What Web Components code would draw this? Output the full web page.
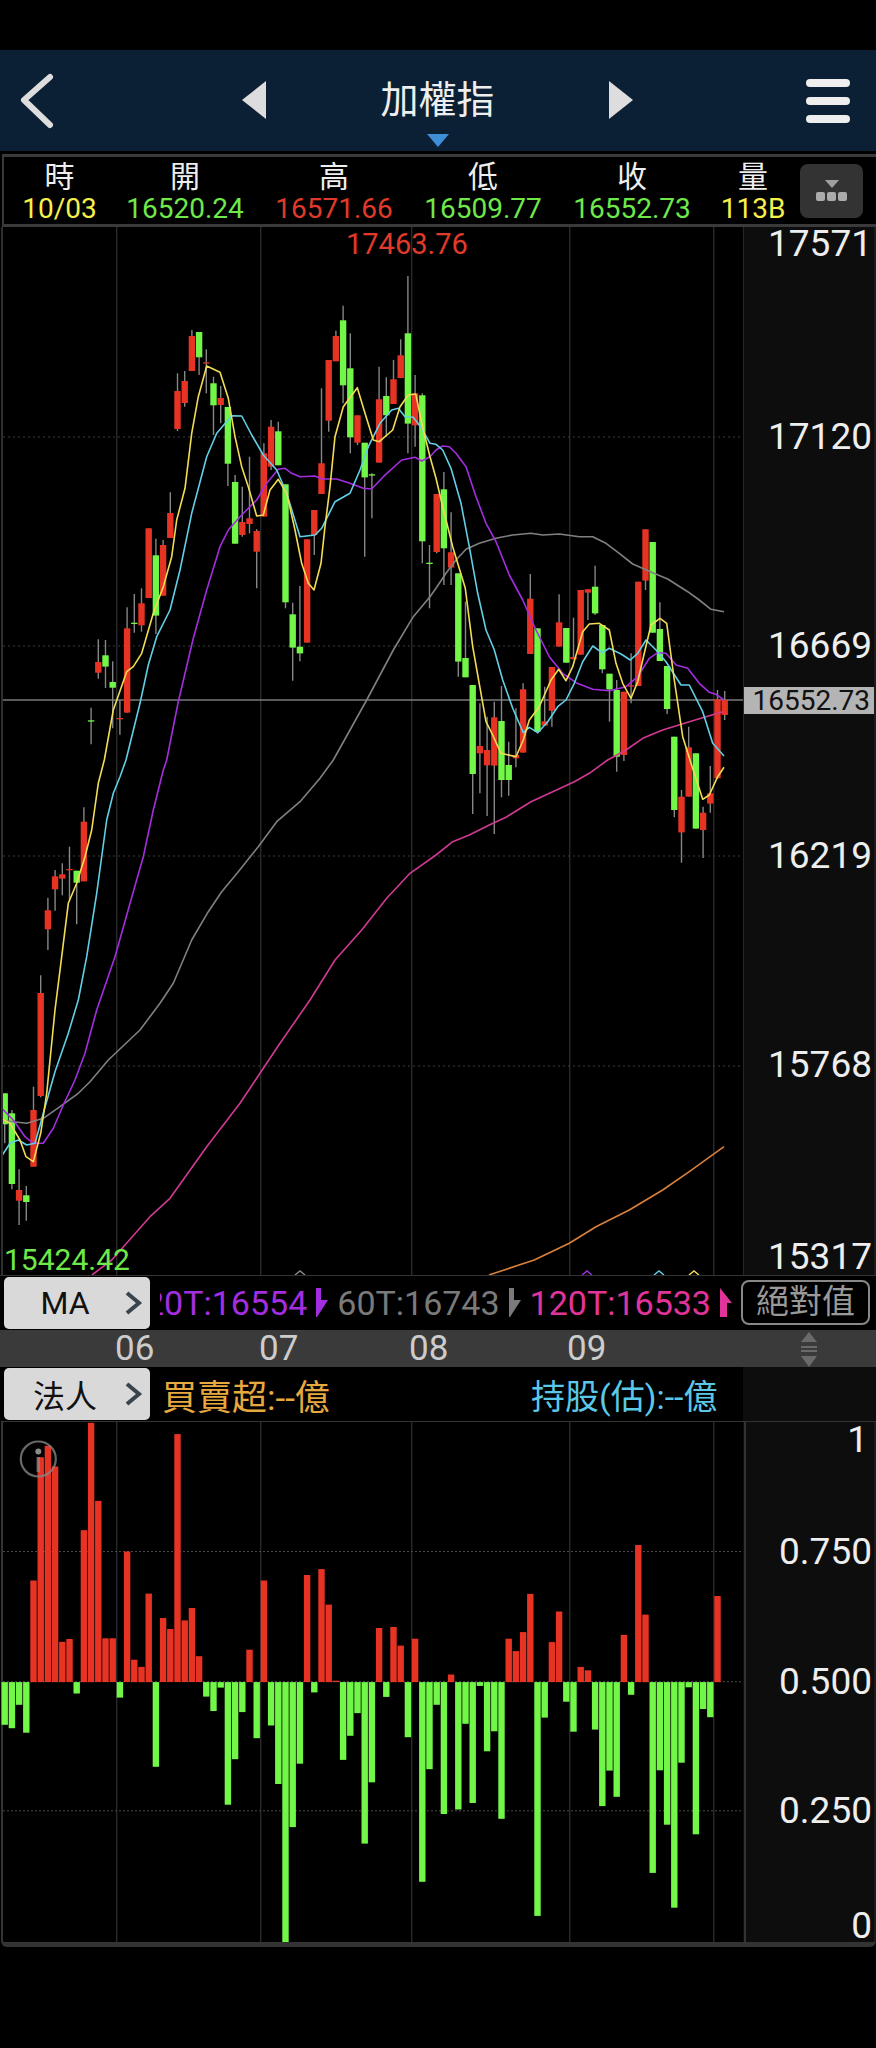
<!DOCTYPE html>
<html lang="zh-Hant">
<head>
<meta charset="utf-8">
<title>加權指</title>
<style>
  html, body { margin: 0; background: #000; }
  body { width: 876px; height: 2048px; overflow: hidden; font-family: Roboto, "Noto Sans CJK TC", sans-serif; }
</style>
</head>
<body>
<quote-header name="加權指"></quote-header>
<quote-table></quote-table>
<kline-chart></kline-chart>
<ma-row></ma-row>
<date-strip></date-strip>
<flow-row></flow-row>
<flow-chart></flow-chart>

<script>
const FUENTE = 'Roboto, "Noto Sans CJK TC", sans-serif';
const ROJO = '#e73323';
const VERDE = '#72f648';
const ns = (x) => x.toFixed(1);

class QuoteHeader extends HTMLElement {
    constructor() {
        super();
        this.attachShadow({ mode: 'open' });
    }

    connectedCallback() {
        this.shadowRoot.innerHTML = `
            <style>
                :host { display: block; margin-top: 50px; height: 101px; background: #0b2034; }
                .barra { display: grid; grid-template-columns: 242px 24px 343px 24px 1fr; height: 101px; position: relative; }
                svg { display: block; }
                .titulo { font: 38px ${FUENTE}; color: #eee; text-align: center; line-height: 101px; height: 101px; }
                .flecha { align-self: start; margin-top: 31px; }
                .back { position: absolute; left: 18px; top: 20px; }
                .menu { position: absolute; left: 806px; top: 29px; }
                .marca { position: absolute; left: 427px; top: 84px; }
            </style>
            <div class="barra">
                <svg class="back" width="40" height="60" viewBox="0 0 40 60"><path d="M32 7 6 30l26 25" fill="none" stroke="#ddd" stroke-width="6" stroke-linecap="round" stroke-linejoin="round"/></svg>
                <span></span>
                <svg class="flecha" width="24" height="38" viewBox="0 0 24 38"><path d="M24 0v38L0 19z" fill="#ddd"/></svg>
                <div class="titulo">${this.getAttribute('name')}</div>
                <svg class="flecha" width="24" height="38" viewBox="0 0 24 38"><path d="M0 0v38l24-19z" fill="#ddd"/></svg>
                <span></span>
                <svg class="menu" width="44" height="45" viewBox="0 0 44 45"><g fill="#eee"><rect width="44" height="8" rx="4"/><rect y="18" width="44" height="8" rx="4"/><rect y="36" width="44" height="8" rx="4"/></g></svg>
                <svg class="marca" width="22" height="13" viewBox="0 0 22 13"><path d="M0 0h22L11 13z" fill="#3f8fd8"/></svg>
            </div>`;
    }
}
customElements.define('quote-header', QuoteHeader);

class QuoteTable extends HTMLElement {
    constructor() {
        super();
        this.attachShadow({ mode: 'open' });
    }

    connectedCallback() {
        const cols = [
            ['時', '10/03', '#f5f04a'],
            ['開', '16520.24', '#6fe84a'],
            ['高', '16571.66', '#e03a2a'],
            ['低', '16509.77', '#6fe84a'],
            ['收', '16552.73', '#6fe84a'],
            ['量', '113B', '#f5f04a'],
        ];
        this.shadowRoot.innerHTML = `
            <style>
                :host { display: block; margin: 3px 0 0 0; border-top: 3px solid #3a3a3a; border-bottom: 3px solid #3a3a3a; border-left: 2px solid #3a3a3a; margin-left: 2px; }
                .tabla { display: grid; grid-template-columns: 111px 140px 158px 140px 158px 84px 63px; height: 67px; font: 28px ${FUENTE}; text-align: center; }
                .h { color: #eee; font-size: 30px; line-height: 34px; padding-top: 3px; }
                .v { line-height: 30px; white-space: nowrap; }
                .mas { align-self: center; margin-left: 5px; width: 63px; height: 54px; background: #333; border-radius: 8px; display: flex; flex-direction: column; align-items: center; justify-content: center; gap: 4px; }
                .puntos { display: flex; gap: 2px; }
                .puntos i { width: 9px; height: 9px; border-radius: 2px; background: #ababab; }
            </style>
            <div class="tabla">
                ${cols.map((c) => `<div><div class="h">${c[0]}</div><div class="v" style="color:${c[2]}">${c[1]}</div></div>`).join('')}
                <div class="mas">
                    <svg width="14" height="8" viewBox="0 0 14 8"><path d="M0 0h14L7 8z" fill="#a0a0a0"/></svg>
                    <div class="puntos"><i></i><i></i><i></i></div>
                </div>
            </div>`;
    }
}
customElements.define('quote-table', QuoteTable);

// velas: tipo, cuerpo arriba, cuerpo abajo, mecha arriba, mecha abajo (coordenadas del zoom 3x)
const VELAS = [
    ['g',2500,2593,2500,2650],['g',2560,2772,2550,2788],['r',2790,2822,2728,2895],['g',2806,2826,2778,2882],
    ['r',2550,2720,2480,2720],['r',2199,2508,2146,2512],['r',1951,2008,1913,2070],['r',1849,1888,1830,1952],
    ['r',1843,1856,1810,1906],['r',1827,1831,1760,1920],['g',1832,1868,1832,1993],['r',1685,1864,1642,1864],
    ['g',1381,1385,1343,1453],['r',1206,1238,1138,1256],['g',1186,1220,1140,1284],['g',1266,1283,1204,1405],
    ['r',1374,1378,1320,1424],['r',1105,1358,1042,1358],['g',1088,1092,1002,1118],['r',1030,1096,985,1115],
    ['r',805,1014,805,1014],['g',886,1067,836,1122],['r',855,1007,840,1007],['r',759,834,697,834],
    ['r',393,507,340,513],['r',363,429,333,440],['r',228,333,210,333],['g',216,292,216,345],
    ['r',307,311,268,400],['g',370,436,350,525],['r',414,435,378,490],['g',441,611,441,678],
    ['g',666,851,645,851],['r',786,825,680,830],['r',775,792,590,820],['r',813,875,808,985],
    ['r',580,770,550,770],['r',500,620,480,630],['g',514,616,485,616],['g',673,1027,673,1045],
    ['g',1063,1163,1028,1262],['g',1160,1180,978,1204],['r',838,1148,838,1148],['r',750,825,750,885],
    ['r',610,702,385,702],['r',300,482,300,515],['r',228,304,212,304],['g',181,376,137,430],
    ['g',325,532,220,580],['r',466,548,466,555],['g',548,652,548,890],['g',643,647,640,775],
    ['r',418,608,320,608],['g',408,466,352,530],['r',358,432,300,432],['r',286,354,238,354],
    ['g',220,491,48,580],['r',400,496,345,560],['g',406,844,400,910],['g',908,912,855,1045],
    ['r',702,876,702,880],['g',688,865,636,975],['r',877,923,757,975],['g',940,1205,940,1250],
    ['g',1194,1252,1025,1252],['g',1275,1542,1275,1662],['r',1458,1480,1330,1600],['r',1470,1516,1370,1668],
    ['r',1372,1517,1325,1722],['g',1383,1560,1278,1612],['g',1515,1560,1445,1607],['r',1485,1495,1345,1522],
    ['r',1288,1478,1270,1478],['r',1016,1182,942,1182],['g',1105,1415,1105,1420],['r',1384,1397,1280,1397],
    ['r',1221,1352,1221,1400],['r',1087,1160,1003,1160],['g',1104,1208,1104,1208],['r',1191,1198,1073,1198],
    ['r',990,1184,990,1184],['r',988,998,988,1080],['g',980,1060,917,1065],['g',1095,1228,1095,1240],
    ['g',1241,1288,1241,1385],['g',1290,1490,1260,1535],['r',1295,1485,1295,1503],['r',1276,1280,1180,1330],
    ['r',965,1278,965,1278],['r',808,962,808,990],['g',846,1118,846,1118],['g',1107,1203,1027,1203],
    ['g',1218,1347,1218,1362],['g',1430,1650,1430,1672],['r',1610,1717,1590,1808],['r',1462,1610,1400,1610],
    ['g',1480,1706,1480,1706],['r',1658,1710,1640,1794],['r',1600,1631,1518,1658],['r',1318,1555,1290,1555],
    ['r',1320,1365,1293,1380],
];

// medias moviles, misma escala. bloques: zona inferior izq, zona superior izq, zona derecha
const izqAbajo = (p) => p.map(([x, y]) => [x, y + 1500]);
const der = (p) => p.map(([x, y]) => [x + 1308, y]);
const LINEAS = {
    '#808080': [...izqAbajo([[5,1080],[40,1085],[80,1090],[130,1075],[180,1040],[235,1000],[270,965],[325,900],[420,810],[480,730],[520,670],[575,540],[625,455],[665,395],[715,335],[775,260],[830,185],[900,125],[960,55]]),
        [1000,1500],[1100,1320],[1180,1170],[1240,1070],[1290,1010],
        ...der([[0,985],[30,940],[60,900],[90,868],[130,850],[180,835],[230,825],[285,820],[320,825],[370,822],[430,830],[470,830],[510,850],[550,880],[590,912],[650,938],[695,957],[755,995],[790,1020],[825,1048],[864,1055]])],
    '#d03a92': [[276,3045],[335,3000],[450,2870],[510,2815],[620,2660],[720,2530],[840,2350],[930,2220],[1005,2100],[1085,2010],[1160,1915],[1230,1840],[1308,1785],
        ...der([[50,1745],[100,1725],[160,1695],[210,1672],[285,1625],[350,1595],[415,1565],[460,1540],[515,1500],[570,1470],[620,1435],[680,1410],[760,1385],[860,1355]])],
    '#d9803a': [[1467,3045],[1603,3000],[1708,2950],[1788,2900],[1888,2850],[1988,2790],[2068,2735],[2172,2660]],
    '#a32ee0': [...izqAbajo([[5,1045],[40,1080],[75,1130],[100,1150],[130,1150],[160,1105],[190,1035],[225,960],[255,880],[290,750],[345,590],[400,395],[430,290],[460,150],[490,30]]),
        [500,1500],[535,1325],[580,1135],[620,990],[660,860],[685,810],[720,770],[770,720],[800,670],[835,628],[855,625],[875,640],[900,650],[945,648],[965,657],[1010,657],[1045,668],[1090,685],[1115,687],[1150,650],[1205,600],[1245,592],[1265,603],[1290,590],
        ...der([[0,570],[20,558],[40,560],[60,580],[90,620],[120,710],[150,790],[180,845],[220,945],[260,1020],[300,1110],[340,1190],[380,1240],[420,1268],[470,1288],[520,1292],[570,1280],[605,1250],[640,1195],[665,1178],[690,1180],[720,1215],[755,1225],[790,1270],[820,1297],[840,1303],[864,1320]])],
    '#62cfe6': [...izqAbajo([[5,1188],[30,1150],[55,1140],[80,1155],[105,1150],[130,1060],[165,935],[205,820],[235,720],[260,590],[290,400],[320,180],[340,100],[360,50]]),
        [378,1500],[420,1330],[445,1215],[470,1130],[510,1050],[540,930],[575,760],[620,590],[650,520],[695,467],[725,468],[755,525],[790,585],[830,630],[860,700],[900,830],[945,825],[965,805],[1005,725],[1050,700],[1080,630],[1105,560],[1140,490],[1175,450],[1195,445],[1215,470],[1240,472],[1265,505],[1290,550],
        ...der([[0,553],[20,570],[45,625],[75,730],[100,860],[125,1000],[150,1110],[175,1170],[200,1260],[230,1345],[262,1418],[280,1402],[305,1418],[335,1385],[365,1340],[390,1320],[415,1270],[440,1205],[470,1158],[498,1178],[520,1165],[555,1182],[583,1200],[605,1180],[630,1140],[660,1170],[690,1205],[735,1275],[760,1275],[800,1355],[830,1450],[864,1488]])],
    '#f2dc55': [...izqAbajo([[8,1078],[30,1090],[60,1140],[78,1190],[100,1205],[122,1120],[140,1000],[165,750],[185,590],[205,430],[230,370],[255,290],[275,210],[295,70]]),
        [313,1500],[340,1350],[380,1235],[400,1220],[425,1180],[460,1060],[490,980],[515,890],[530,780],[555,685],[575,520],[595,410],[620,318],[660,337],[685,415],[705,530],[725,620],[745,680],[770,768],[790,765],[810,690],[835,658],[860,700],[885,810],[905,910],[925,970],[942,990],[963,910],[975,800],[990,680],[1005,530],[1030,440],[1072,383],[1095,460],[1120,540],[1138,545],[1178,510],[1200,440],[1225,405],[1247,402],[1270,510],[1290,590],
        ...der([[0,655],[20,740],[50,860],[88,985],[110,1160],[150,1385],[170,1425],[195,1480],[240,1490],[262,1440],[280,1380],[310,1340],[345,1260],[368,1228],[390,1262],[410,1220],[440,1115],[460,1092],[490,1090],[520,1110],[540,1210],[560,1270],[585,1315],[605,1265],[625,1180],[645,1095],[672,1075],[692,1090],[715,1260],[740,1430],[765,1510],[800,1618],[820,1605],[845,1550],[864,1522]])],
};

class KlineChart extends HTMLElement {
    constructor() {
        super();
        this.attachShadow({ mode: 'open' });
    }

    connectedCallback() {
        const px = (X) => X / 3;
        const py = (Y) => Y / 3 + 33;
        let dib = '';
        // rejilla
        [116.7, 260.7, 411.7, 569.7, 713.7].forEach((x) => {
            dib += `<path d="M${x} 0V1048" stroke="#2a2a2a" stroke-width="1.4"/>`;
        });
        [210, 419, 629, 839].forEach((y) => {
            dib += `<path d="M3 ${y}H743" stroke="#3c3c3c" stroke-width="1" stroke-dasharray="2 3"/>`;
        });
        dib += '<path d="M3 473H743" stroke="#7a7a7a" stroke-width="1.6"/>';
        // velas
        VELAS.forEach((v, i) => {
            const x = (14 + 21.6 * i) / 3;
            const color = v[0] === 'r' ? ROJO : VERDE;
            dib += `<path d="M${ns(x)} ${ns(py(v[3]))}V${ns(py(v[4]))}" stroke="#868686" stroke-width="1.4"/>`;
            dib += `<rect x="${ns(x - 3.2)}" y="${ns(py(v[1]))}" width="6.4" height="${ns((v[2] - v[1]) / 3)}" fill="${color}"/>`;
        });
        // medias
        Object.entries(LINEAS).forEach(([color, pts]) => {
            const d = pts.map(([X, Y]) => `${ns(px(X))},${ns(py(Y))}`).join(' ');
            dib += `<polyline points="${d}" fill="none" stroke="${color}" stroke-width="1.6" stroke-linejoin="round"/>`;
        });
        // marcas abajo
        [[300, '#888'], [587, '#a32ee0'], [659, '#62cfe6'], [694, '#f2dc55']].forEach(([x, c]) => {
            dib += `<path d="M${x - 5} 1048l5-4 5 4" fill="none" stroke="${c}" stroke-width="1.4"/>`;
        });
        const marcas = ['17571', '17120', '16669', '16219', '15768', '15317'];
        this.shadowRoot.innerHTML = `
            <style>
                :host { display: block; }
                .marco { display: grid; grid-template-columns: 743px 1fr; height: 1048px; border-bottom: 1px solid #333; position: relative; font-family: ${FUENTE}; }
                .plano { border-left: 2px solid #2e2e2e; margin-left: 1px; position: relative; overflow: hidden; }
                svg { position: absolute; left: -3px; top: 0; }
                .eje { background: #0d0d0d; border-left: 1px solid #262626; border-right: 2px solid #1c1c1c; display: grid; grid-template-rows: 190px 209px 210px 209px 192px 38px; color: #eee; font-size: 37px; text-align: right; padding-right: 2px; box-sizing: border-box; }
                .eje div { line-height: 40px; align-self: start; }
                .eje div:first-child { line-height: 34px; }
                .max { position: absolute; left: 346px; top: 0; font-size: 29px; line-height: 34px; color: #e03a2a; }
                .min { position: absolute; left: 4px; top: 1016px; font-size: 30px; line-height: 34px; color: #6fe84a; }
                .tag { position: absolute; left: 744px; top: 460px; width: 130px; height: 27px; background: #b4b4b4; color: #111; font-size: 28px; line-height: 28px; text-align: right; padding-right: 4px; box-sizing: border-box; }
            </style>
            <div class="marco">
                <div class="plano"><svg width="743" height="1048" viewBox="0 0 743 1048">${dib}</svg></div>
                <div class="eje">${marcas.map((m) => `<div>${m}</div>`).join('')}</div>
                <div class="max">17463.76</div>
                <div class="min">15424.42</div>
                <div class="tag">16552.73</div>
            </div>`;
    }
}
customElements.define('kline-chart', KlineChart);

class SideButton extends HTMLElement {
    constructor() {
        super();
        this.attachShadow({ mode: 'open' });
    }

    connectedCallback() {
        this.shadowRoot.innerHTML = `
            <style>
                :host { display: flex; align-items: center; width: 146px; height: 52px; margin-left: 4px; background: #d9d9d9; border-radius: 5px; color: #111; font: 32px ${FUENTE}; flex: none; }
                .txt { width: 122px; text-align: center; }
                svg { display: block; flex: none; margin-left: -1px; }
            </style>
            <div class="txt"><slot></slot></div>
            <svg width="18" height="24" viewBox="0 0 18 24"><path d="M2 2 14 12 2 22" fill="none" stroke="#39444d" stroke-width="4"/></svg>`;
    }
}
customElements.define('side-button', SideButton);

class MaRow extends HTMLElement {
    constructor() {
        super();
        this.attachShadow({ mode: 'open' });
    }

    connectedCallback() {
        const baja = (c) => `<svg width="12" height="29" viewBox="0 0 12 29"><path d="M0 0h5v12h7L1 29H0z" fill="${c}"/></svg>`;
        const sube = (c) => `<svg width="12" height="29" viewBox="0 0 12 29"><path d="M0 0l12 15H7v14H0z" fill="${c}"/></svg>`;
        this.shadowRoot.innerHTML = `
            <style>
                :host { display: flex; align-items: center; height: 53px; font: 34px ${FUENTE}; }
                .pista { flex: none; width: 581px; margin-left: 10px; overflow: hidden; white-space: nowrap; display: flex; align-items: center; }
                .pista span { flex: none; margin-right: 9px; }
                .pista svg { flex: none; margin-right: 9px; }
                .pista span:first-child { margin-left: -15px; }
                .abs { flex: none; width: 129px; height: 45px; box-sizing: border-box; border: 2px solid #888; border-radius: 8px; color: #999; font-size: 33px; line-height: 40px; text-align: center; }
            </style>
            <side-button>MA</side-button>
            <div class="pista">
                <span style="color:#a32ee0">20T:16554</span>${baja('#a32ee0')}
                <span style="color:#7a7a7a">60T:16743</span>${baja('#7a7a7a')}
                <span style="color:#e0349a">120T:16533</span>${sube('#e0349a')}
            </div>
            <div class="abs">絕對值</div>`;
    }
}
customElements.define('ma-row', MaRow);

class DateStrip extends HTMLElement {
    constructor() {
        super();
        this.attachShadow({ mode: 'open' });
    }

    connectedCallback() {
        this.shadowRoot.innerHTML = `
            <style>
                :host { display: grid; grid-template-columns: 115px 144px 150px 158px 233px 1fr; height: 37px; margin-top: 1px; background: #3a3a3a; color: #ccc; font: 35px/37px ${FUENTE}; align-items: center; }
                svg { display: block; }
            </style>
            <span></span><span>06</span><span>07</span><span>08</span><span>09</span>
            <svg width="18" height="36" viewBox="0 0 18 36"><g fill="#6a6a6a"><path d="M9 1 17 11H1z"/><rect x="1" y="15" width="16" height="2"/><rect x="1" y="19" width="16" height="2"/><path d="M1 25H17L9 36z"/></g></svg>`;
    }
}
customElements.define('date-strip', DateStrip);

class FlowRow extends HTMLElement {
    constructor() {
        super();
        this.attachShadow({ mode: 'open' });
    }

    connectedCallback() {
        this.shadowRoot.innerHTML = `
            <style>
                :host { display: flex; align-items: center; height: 54px; font: 34px ${FUENTE}; }
                .a { color: #e8a840; margin-left: 12px; width: 369px; white-space: nowrap; font-size: 35px; }
                .b { color: #5cc8e8; width: 212px; white-space: nowrap; }
                .resto { flex: 1; align-self: stretch; background: #0d0d0d; }
            </style>
            <side-button>法人</side-button>
            <div class="a">買賣超:--億</div>
            <div class="b">持股(估):--億</div>
            <div class="resto"></div>`;
    }
}
customElements.define('flow-row', FlowRow);

// barras: alto en coordenadas del zoom, base 761; mas chico = rojo, mas grande = verde
const BARRAS = [885,895,827,908,466,108,75,135,644,636,794,320,8,235,634,634,806,382,696,717,504,1007,575,607,41,582,546,686,803,845,777,1117,985,848,667,924,466,887,1057,1516,1182,998,450,791,433,536,757,987,917,851,1230,1052,604,804,601,655,921,635,1341,1014,827,1144,739,1131,882,1112,772,962,904,1158,635,671,616,505,1440,864,645,556,818,905,717,727,899,1121,1018,1094,624,798,363,565,1315,1017,1175,1416,995,776,1203,839,863,511];

class FlowChart extends HTMLElement {
    constructor() {
        super();
        this.attachShadow({ mode: 'open' });
    }

    connectedCallback() {
        const ESC = 2.904;
        const py = (v) => v / ESC - 2;
        const base = py(761);
        let dib = '';
        [116.7, 260.7, 411.7, 569.7, 713.7].forEach((x) => {
            dib += `<path d="M${x} 0V520" stroke="#2a2a2a" stroke-width="1.4"/>`;
        });
        [382, 760, 1135].forEach((v) => {
            dib += `<path d="M3 ${ns(py(v))}H743" stroke="#4a4a4a" stroke-width="1" stroke-dasharray="2 2"/>`;
        });
        BARRAS.forEach((v, i) => {
            const x = (14 + 21.6 * i) / 3 - 3.2;
            const y = py(v);
            const top = Math.min(y, base);
            dib += `<rect x="${ns(x)}" y="${ns(top)}" width="6.4" height="${ns(Math.abs(y - base))}" fill="${v < 761 ? ROJO : VERDE}"/>`;
        });
        dib += `<g fill="none" stroke="#8a8a8a" stroke-opacity=".75"><circle cx="38.3" cy="37" r="17.5" stroke-width="2.2"/><path d="M38.3 35V50" stroke-width="3.4"/></g><circle cx="38.3" cy="29.5" r="3" fill="#8a8a8a"/>`;
        this.shadowRoot.innerHTML = `
            <style>
                :host { display: block; }
                .marco { display: grid; grid-template-columns: 743px 1fr; height: 520px; border-top: 1px solid #333; border-bottom: 5px solid #333; border-left: 2px solid #333; margin-left: 1px; box-sizing: content-box; font-family: ${FUENTE}; border-bottom-left-radius: 6px; border-bottom-right-radius: 6px; }
                .plano { margin-left: -3px; border-right: 2px solid #333; position: relative; overflow: hidden; }
                svg { display: block; }
                .eje { background: #0d0d0d; margin-left: -3px; display: grid; grid-template-rows: 110px 130px 129px 115px 36px; color: #eee; font-size: 37px; text-align: right; padding-right: 2px; border-right: 2px solid #1c1c1c; }
                .eje div { line-height: 40px; align-self: start; }
                .eje div:first-child { line-height: 36px; padding-right: 4px; }
            </style>
            <div class="marco">
                <div class="plano"><svg width="743" height="520" viewBox="0 0 743 520">${dib}</svg></div>
                <div class="eje"><div>1</div><div>0.750</div><div>0.500</div><div>0.250</div><div>0</div></div>
            </div>`;
    }
}
customElements.define('flow-chart', FlowChart);
</script>
</body>
</html>
